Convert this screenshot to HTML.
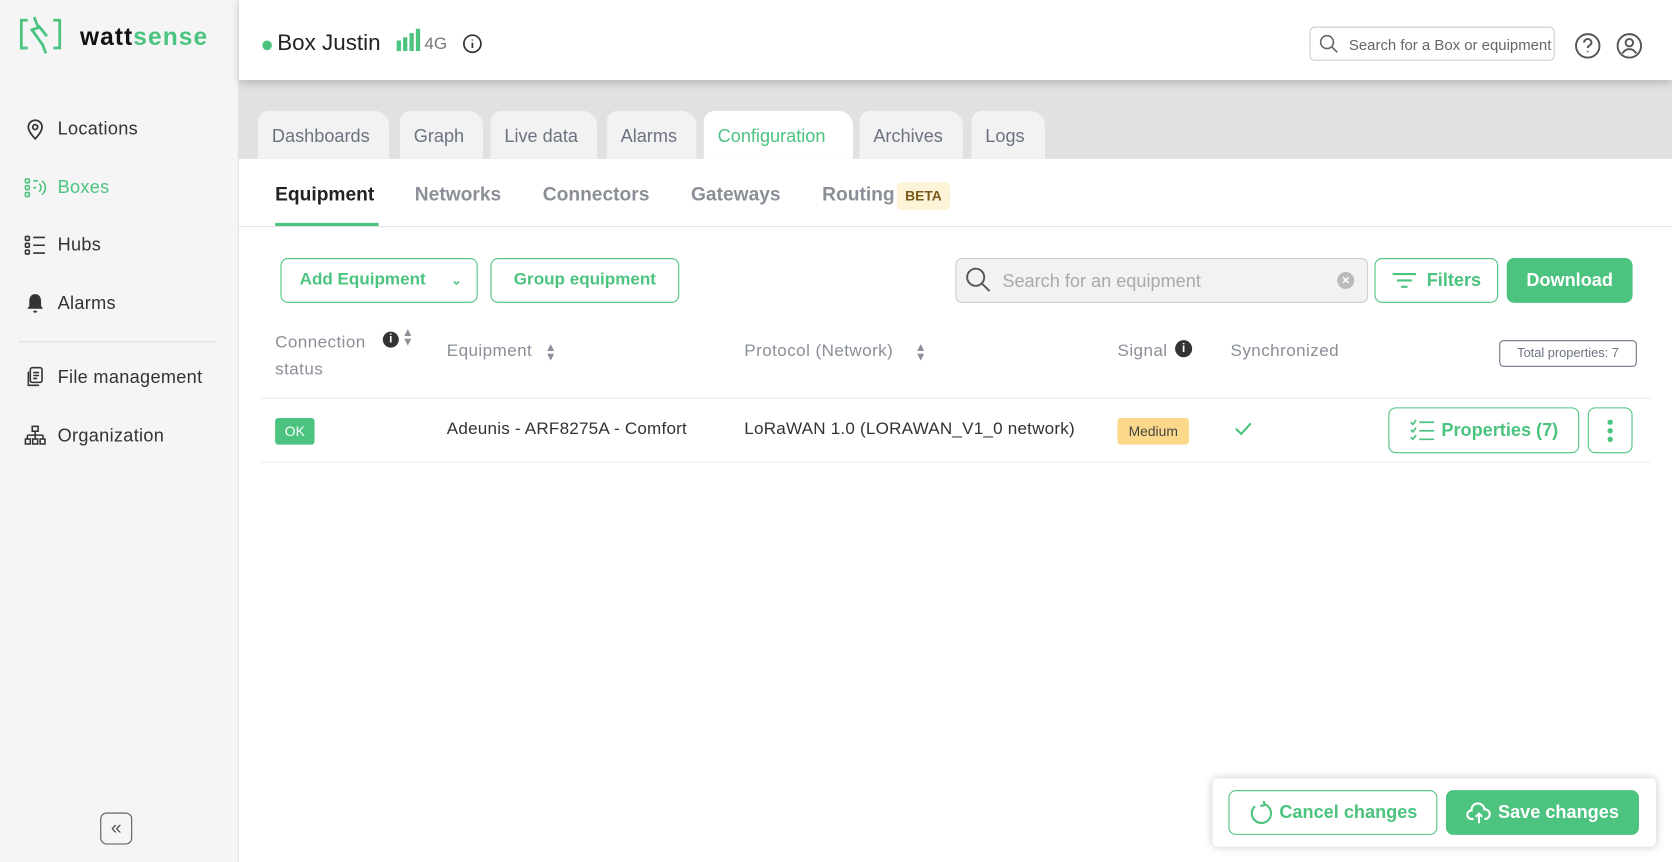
<!DOCTYPE html>
<html><head><meta charset="utf-8"><style>
*{box-sizing:border-box;margin:0;padding:0}
html,body{width:1672px;height:862px;overflow:hidden;background:#fff}
#w{width:1568px;height:809px;position:relative;transform:scale(1.06633);transform-origin:0 0;font-family:"Liberation Sans",sans-serif;color:#333}
.abs{position:absolute}
.side{left:0;top:0;width:224px;height:809px;background:#f4f5f4;border-right:1px solid #e2e2e2}
.nav{position:absolute;left:22px;font-size:17px;color:#333;display:flex;align-items:center;gap:10px;letter-spacing:0.3px}
.nav svg{width:22px;height:22px}
.top{left:224px;top:0;width:1344px;height:75px;background:#fff;box-shadow:0 3px 8px rgba(0,0,0,.18);z-index:2}
.band{left:224px;top:75px;width:1344px;height:74px;background:#e1e1e1}
.tab{position:absolute;top:104px;height:45px;background:#f2f2f2;border-radius:10px 14px 0 0;font-size:17px;color:#6b7280;padding:14px 0 0 13px}
.sub{position:absolute;top:172px;font-size:18px;color:#8a8f98;font-weight:bold}
.btn{position:absolute;border:1px solid #4cc37f;border-radius:7px;color:#4cc37f;font-weight:bold;font-size:16px;display:flex;align-items:center;justify-content:center;background:#fff}
.th{position:absolute;font-size:16px;color:#8a8f98;letter-spacing:0.4px}
.td{position:absolute;font-size:16px;color:#333;top:394px;letter-spacing:0.2px}
</style></head><body><div id="w">
<div class="abs side">
 <svg class="abs" style="left:18px;top:15px" width="40" height="38" viewBox="0 0 40 38" fill="none" stroke="#4cc37f" stroke-width="2.6"><path d="M8 4H2v26h6M32 4h6v26h-6M14 1l4 10-6 2 10 14 3 8M18 9l8 10"/></svg>
 <div class="abs" style="left:75px;top:21px;font-size:23px;font-weight:bold;letter-spacing:1px"><span style="color:#111">watt</span><span style="color:#4cc37f">sense</span></div>
 <div class="nav" style="top:110px"><svg viewBox="0 0 24 24" fill="none" stroke="#333" stroke-width="1.8"><path d="M12 22s-7-7-7-12a7 7 0 0114 0c0 5-7 12-7 12z"/><circle cx="12" cy="10" r="2.5"/></svg>Locations</div>
 <div class="nav" style="top:165px;color:#4cc37f"><svg viewBox="0 0 24 24" fill="none" stroke="#4cc37f" stroke-width="1.6"><rect x="2" y="3" width="4" height="4" rx="1"/><rect x="2" y="10" width="4" height="4" rx="1"/><rect x="2" y="17" width="4" height="4" rx="1"/><path d="M10 5h5M10 12h3M16 8a5 5 0 010 8M19 5a9 9 0 010 14"/></svg>Boxes</div>
 <div class="nav" style="top:219px"><svg viewBox="0 0 24 24" fill="none" stroke="#333" stroke-width="1.6"><rect x="2" y="3" width="4" height="4" rx="1"/><rect x="2" y="10" width="4" height="4" rx="1"/><rect x="2" y="17" width="4" height="4" rx="1"/><path d="M10 4h12M10 12h12M10 20h12"/></svg>Hubs</div>
 <div class="nav" style="top:274px"><svg viewBox="0 0 24 24" fill="#333"><path d="M12 2c-4 0-6 3-6 7v5l-2 3h16l-2-3V9c0-4-2-7-6-7zM10 19h4a2 2 0 01-4 0z"/></svg>Alarms</div>
 <div class="abs" style="left:17px;top:320px;width:186px;height:1px;background:#ddd"></div>
 <div class="nav" style="top:343px"><svg viewBox="0 0 24 24" fill="none" stroke="#333" stroke-width="1.6"><rect x="7" y="2" width="12" height="15" rx="2"/><path d="M5 6v14h11M10 7h6M10 10h6M10 13h4"/></svg>File management</div>
 <div class="nav" style="top:398px"><svg viewBox="0 0 24 24" fill="none" stroke="#333" stroke-width="1.6"><rect x="9" y="2" width="6" height="5"/><path d="M12 7v4M4 11h16M4 11v4M12 11v4M20 11v4"/><rect x="2" y="15" width="5" height="5"/><rect x="9.5" y="15" width="5" height="5"/><rect x="17" y="15" width="5" height="5"/></svg>Organization</div>
 <div class="abs" style="left:94px;top:762px;width:30px;height:30px;border:1px solid #555;border-radius:6px;text-align:center;font-size:18px;line-height:26px;color:#555">«</div>
</div>
<div class="abs top">
 <div class="abs" style="left:22px;top:38px;width:9px;height:9px;border-radius:50%;background:#4cc37f"></div>
 <div class="abs" style="left:36px;top:29px;font-size:21px;color:#222">Box Justin</div>
 <svg class="abs" style="left:147px;top:26px" width="24" height="22"><rect x="1" y="12" width="4" height="10" fill="#4cc37f"/><rect x="7" y="9" width="4" height="13" fill="#4cc37f"/><rect x="13" y="5" width="4" height="17" fill="#4cc37f"/><rect x="19" y="1" width="4" height="21" fill="#4cc37f"/></svg>
 <div class="abs" style="left:174px;top:33px;font-size:16px;color:#777">4G</div>
 <svg class="abs" style="left:209px;top:31px" width="20" height="20" fill="none" stroke="#333" stroke-width="1.6"><circle cx="10" cy="10" r="8"/><path d="M10 9v5M10 6v1"/></svg>
 <div class="abs" style="left:1004px;top:25px;width:230px;height:32px;border:1px solid #ccc;border-radius:5px;font-size:14px;color:#666;padding:8px 0 0 36px">Search for a Box or equipment</div>
 <svg class="abs" style="left:1013px;top:32px" width="18" height="18" fill="none" stroke="#666" stroke-width="1.5"><circle cx="7.5" cy="7.5" r="6"/><path d="M12 12l5 5"/></svg>
 <svg class="abs" style="left:1252px;top:30px" width="26" height="26" fill="none" stroke="#555" stroke-width="1.8"><circle cx="13" cy="13" r="11"/><path d="M9.5 10a3.5 3.5 0 117 0c0 2.5-3.5 2.5-3.5 5M13 18v1"/></svg>
 <svg class="abs" style="left:1291px;top:30px" width="26" height="26" fill="none" stroke="#555" stroke-width="1.8"><circle cx="13" cy="13" r="11"/><circle cx="13" cy="10" r="3.5"/><path d="M6.5 20c2-3 4-4 6.5-4s4.5 1 6.5 4"/></svg>
</div>
<div class="abs band"></div>
<div class="tab" style="left:242px;width:123px">Dashboards</div>
<div class="tab" style="left:375px;width:78px">Graph</div>
<div class="tab" style="left:460px;width:100px">Live data</div>
<div class="tab" style="left:569px;width:84px">Alarms</div>
<div class="tab" style="left:660px;width:140px;background:#fff;color:#4cc37f">Configuration</div>
<div class="tab" style="left:806px;width:97px">Archives</div>
<div class="tab" style="left:911px;width:69px">Logs</div>
<div class="sub" style="left:258px;color:#222">Equipment</div>
<div class="abs" style="left:258px;top:209px;width:97px;height:3px;background:#4cc37f"></div>
<div class="sub" style="left:389px">Networks</div>
<div class="sub" style="left:509px">Connectors</div>
<div class="sub" style="left:648px">Gateways</div>
<div class="sub" style="left:771px">Routing</div>
<div class="abs" style="left:841px;top:171px;width:50px;height:26px;background:#fdf3d8;border-radius:4px;font-size:13px;font-weight:bold;color:#7a5a1a;text-align:center;line-height:26px">BETA</div>
<div class="abs" style="left:224px;top:212px;width:1344px;height:1px;background:#e2e2e2"></div>

<div class="btn" style="left:263px;top:242px;width:185px;height:42px;justify-content:flex-start;padding-left:17px">Add Equipment<span style="position:absolute;right:14px;font-size:12px">⌄</span></div>
<div class="btn" style="left:460px;top:242px;width:177px;height:42px">Group equipment</div>
<div class="abs" style="left:896px;top:242px;width:387px;height:42px;background:#f1f2f4;border:1px solid #ccc;border-radius:6px;font-size:17px;color:#aaa;padding:11px 0 0 43px">Search for an equipment</div>
<svg class="abs" style="left:905px;top:250px" width="26" height="26" fill="none" stroke="#555" stroke-width="1.8"><circle cx="10" cy="10" r="8"/><path d="M16 16l7 7"/></svg>
<div class="abs" style="left:1254px;top:255px;width:16px;height:16px;border-radius:50%;background:#bbb;color:#fff;font-size:12px;line-height:16px;text-align:center;font-weight:bold">×</div>
<div class="btn" style="left:1289px;top:242px;width:116px;height:42px;font-size:17px"><svg width="26" height="16" style="margin-right:7px" stroke="#4cc37f" stroke-width="2"><path d="M1 2h22M5 8h14M9 14h6"/></svg>Filters</div>
<div class="btn" style="left:1413px;top:242px;width:118px;height:42px;background:#4cc37f;color:#fff;font-size:17px">Download</div>

<div class="th" style="left:258px;top:309px;line-height:25px">Connection<br>status</div>
<div class="abs" style="left:359px;top:311px;width:15px;height:15px;border-radius:50%;background:#333;color:#fff;font-size:11px;font-weight:bold;text-align:center;line-height:15px">i</div>
<div class="abs" style="left:377px;top:308px;font-size:11px;color:#8a8f98;line-height:9px">▲<br>▼</div>
<div class="th" style="left:419px;top:321px">Equipment</div>
<div class="abs" style="left:511px;top:322px;font-size:11px;color:#8a8f98;line-height:9px">▲<br>▼</div>
<div class="th" style="left:698px;top:321px">Protocol (Network)</div>
<div class="abs" style="left:858px;top:322px;font-size:11px;color:#8a8f98;line-height:9px">▲<br>▼</div>
<div class="th" style="left:1048px;top:321px">Signal</div>
<div class="abs" style="left:1102px;top:319px;width:16px;height:16px;border-radius:50%;background:#333;color:#fff;font-size:11px;font-weight:bold;text-align:center;line-height:16px">i</div>
<div class="th" style="left:1154px;top:321px">Synchronized</div>
<div class="abs" style="left:1406px;top:319px;width:129px;height:25px;border:1px solid #6b7280;border-radius:4px;font-size:12px;color:#6b7280;text-align:center;line-height:23px">Total properties: 7</div>
<div class="abs" style="left:245px;top:373px;width:1303px;height:1px;background:#e5e5e5"></div>
<div class="abs" style="left:245px;top:433px;width:1303px;height:1px;background:#eee"></div>
<div class="abs" style="left:258px;top:392px;width:37px;height:25px;background:#4cc37f;border-radius:3px;color:#fff;font-size:13px;text-align:center;line-height:25px">OK</div>
<div class="td" style="left:419px">Adeunis - ARF8275A - Comfort</div>
<div class="td" style="left:698px">LoRaWAN 1.0 (LORAWAN_V1_0 network)</div>
<div class="abs" style="left:1048px;top:392px;width:67px;height:25px;background:#fcd98a;border-radius:3px;font-size:13px;color:#444;text-align:center;line-height:25px">Medium</div>
<svg class="abs" style="left:1157px;top:394px" width="18" height="16" fill="none" stroke="#4cc37f" stroke-width="2"><path d="M2 8l5 5 9-10"/></svg>
<div class="btn" style="left:1302px;top:382px;width:179px;height:43px;font-size:17px"><svg width="24" height="22" style="margin-right:6px" fill="none" stroke="#4cc37f" stroke-width="1.6"><path d="M1 3l2 2 3-4M1 10l2 2 3-4M1 17l2 2 3-4M9 3h14M9 11h14M9 19h14"/></svg>Properties (7)</div>
<div class="btn" style="left:1489px;top:382px;width:42px;height:43px"><svg width="6" height="22" fill="#4cc37f"><circle cx="3" cy="3" r="2.5"/><circle cx="3" cy="11" r="2.5"/><circle cx="3" cy="19" r="2.5"/></svg></div>
<div class="abs" style="left:1137px;top:730px;width:416px;height:64px;background:#fff;border-radius:5px;box-shadow:0 0 8px rgba(0,0,0,.2)"></div>
<div class="btn" style="left:1152px;top:741px;width:196px;height:42px;font-size:17px"><svg width="22" height="22" style="margin-right:7px" fill="none" stroke="#4cc37f" stroke-width="2"><path d="M14 3a9 9 0 11-8 2M14 0l1 4-4 1"/></svg>Cancel changes</div>
<div class="btn" style="left:1356px;top:741px;width:181px;height:42px;background:#4cc37f;color:#fff;font-size:17px"><svg width="24" height="22" style="margin-right:6px" fill="none" stroke="#fff" stroke-width="2"><path d="M7 17H5a4 4 0 010-8 6 6 0 0112-1 4.5 4.5 0 011 9h-1M12 21v-9M9 15l3-3 3 3"/></svg>Save changes</div>
</div></body></html>
